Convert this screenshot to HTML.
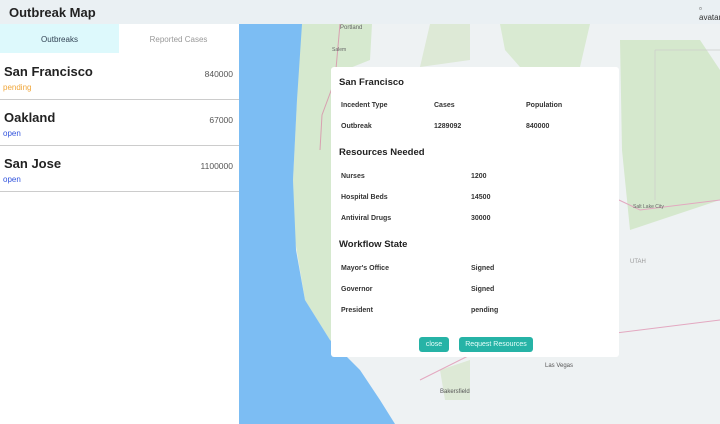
<!DOCTYPE html>
<html><head><meta charset="utf-8"><style>
*{margin:0;padding:0;box-sizing:border-box}
body{width:720px;height:424px;overflow:hidden;font-family:"Liberation Sans",sans-serif;background:#fff;position:relative}
.hdr{position:absolute;left:0;top:0;width:720px;height:24px;background:#eaf0f3}
.hdr h1{position:absolute;left:9px;top:5px;font-size:13px;font-weight:bold;color:#222}
.av{position:absolute;left:699px;top:4px;font-size:8px;color:#333;line-height:9px}
.left{position:absolute;left:0;top:24px;width:239px;height:400px;background:#fff}
.tab{position:absolute;top:0;height:29px;width:119px;font-size:8px;text-align:center;line-height:32px}
.item{position:absolute;left:0;width:239px;height:46px;border-bottom:1px solid #ccc}
.item .n{position:absolute;left:4px;top:10px;font-size:13px;font-weight:bold;color:#222}
.item .v{position:absolute;right:6px;top:15px;font-size:8.5px;color:#555}
.item .s{position:absolute;left:3px;top:29px;font-size:8px}
.map{position:absolute;left:239px;top:24px;width:481px;height:400px}
.modal{position:absolute;left:331px;top:67px;width:288px;height:290px;background:#fff;border-radius:3px}
.modal div{position:absolute;font-size:7px;font-weight:bold;color:#333}
.modal .h{font-size:9.5px;color:#222;left:8px}
.btn{position:absolute;background:#26b3a6;color:#e8fffb;font-size:7px;text-align:center;line-height:15px;border-radius:3px;height:15px;top:270px}
</style></head><body>
<div class="hdr"><h1>Outbreak Map</h1><div class="av">▫<br>avatar</div></div>
<div class="left">
<div class="tab" style="left:0;background:#ddf9fc;color:#345">Outbreaks</div>
<div class="tab" style="left:119px;color:#999">Reported Cases</div>
<div class="item" style="top:30px"><span class="n">San Francisco</span><span class="v">840000</span><span class="s" style="color:#f0a63a">pending</span></div>
<div class="item" style="top:76px"><span class="n">Oakland</span><span class="v">67000</span><span class="s" style="color:#3355dd">open</span></div>
<div class="item" style="top:122px"><span class="n">San Jose</span><span class="v">1100000</span><span class="s" style="color:#3355dd">open</span></div>
</div>
<svg class="map" viewBox="239 24 481 400" width="481" height="400">
<rect x="239" y="24" width="481" height="400" fill="#eef2f3"/>
<path d="M300 24 L372 24 L370 60 L345 70 L335 120 L332 200 L332 300 L350 340 L345 360 L330 340 L305 300 L295 240 L293 180 L297 100 Z" fill="#d6e9cf"/>
<path d="M430 24 L470 24 L470 60 L420 67 Z" fill="#dde9d6"/>
<path d="M500 24 L590 24 L580 67 L520 67 L505 50 Z" fill="#d9ead2"/>
<path d="M620 40 L700 40 L720 70 L720 200 L690 210 L660 220 L630 230 L622 150 Z" fill="#d5e8cd"/>
<path d="M440 370 L470 360 L470 400 L445 400 Z" fill="#dde9d6"/>
<path d="M239 24 L302 24 L297 100 L293 180 L296 250 L305 300 L330 340 L360 370 L380 400 L395 424 L239 424 Z" fill="#7cbdf3"/>
<path d="M340 24 L335 80 L322 115 L320 150" stroke="#d8a0b0" fill="none" stroke-width="1"/>
<path d="M420 380 L480 350 L560 340 L640 330 L720 320" stroke="#e3a8c0" fill="none" stroke-width="1"/>
<path d="M619 200 L640 210 L720 200" stroke="#e3a8c0" fill="none" stroke-width="1"/>
<path d="M655 50 L720 50 M655 50 L655 200" stroke="#ccc" fill="none" stroke-width="0.7"/>
<text x="340" y="29" font-size="6" fill="#666" font-family="Liberation Sans">Portland</text>
<text x="332" y="51" font-size="5" fill="#666" font-family="Liberation Sans">Salem</text>
<text x="633" y="208" font-size="5" fill="#666" font-family="Liberation Sans">Salt Lake City</text>
<text x="630" y="263" font-size="6" fill="#999" font-family="Liberation Sans">UTAH</text>
<text x="545" y="367" font-size="6" fill="#555" font-family="Liberation Sans">Las Vegas</text>
<text x="440" y="393" font-size="6" fill="#555" font-family="Liberation Sans">Bakersfield</text>
</svg>
<div class="modal">
<div class="h" style="top:10px">San Francisco</div>
<div style="left:10px;top:35px">Incedent Type</div><div style="left:103px;top:35px">Cases</div><div style="left:195px;top:35px">Population</div>
<div style="left:10px;top:56px">Outbreak</div><div style="left:103px;top:56px">1289092</div><div style="left:195px;top:56px">840000</div>
<div class="h" style="top:80px">Resources Needed</div>
<div style="left:10px;top:106px">Nurses</div><div style="left:140px;top:106px">1200</div>
<div style="left:10px;top:127px">Hospital Beds</div><div style="left:140px;top:127px">14500</div>
<div style="left:10px;top:148px">Antiviral Drugs</div><div style="left:140px;top:148px">30000</div>
<div class="h" style="top:172px">Workflow State</div>
<div style="left:10px;top:198px">Mayor's Office</div><div style="left:140px;top:198px">Signed</div>
<div style="left:10px;top:219px">Governor</div><div style="left:140px;top:219px">Signed</div>
<div style="left:10px;top:240px">President</div><div style="left:140px;top:240px">pending</div>
<span class="btn" style="left:88px;width:30px">close</span>
<span class="btn" style="left:128px;width:74px">Request Resources</span>
</div>
</body></html>
